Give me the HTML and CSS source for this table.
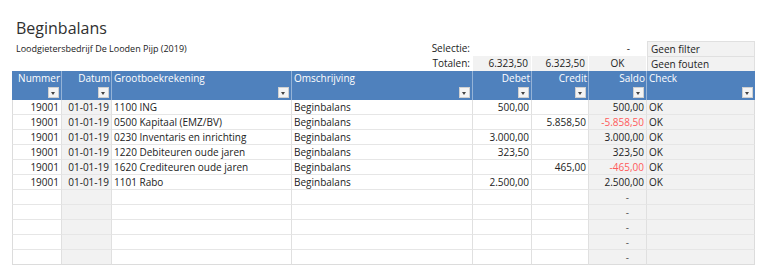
FILE: index.html
```html
<!DOCTYPE html>
<html lang="nl">
<head>
<meta charset="utf-8">
<title>Beginbalans</title>
<link rel="stylesheet" href="styles.css">
</head>
<body>
<div class="page">
  <h1 class="title">Beginbalans</h1>
  <div class="sheet">
    <div class="c sub span3">Loodgietersbedrijf De Looden Pijp (2019)</div>
    <div class="c r">Selectie:</div>
    <div class="c"></div>
    <div class="c"></div>
    <div class="c r dash">-</div>
    <div class="c box">Geen filter</div>

    <div class="c span3"></div>
    <div class="c r">Totalen:</div>
    <div class="c r tot">6.323,50</div>
    <div class="c r tot">6.323,50</div>
    <div class="c ctr tot">OK</div>
    <div class="c box">Geen fouten</div>

    <div class="h r"><span>Nummer</span><i class="flt"></i></div>
    <div class="h r"><span>Datum</span><i class="flt"></i></div>
    <div class="h"><span>Grootboekrekening</span><i class="flt"></i></div>
    <div class="h"><span>Omschrijving</span><i class="flt"></i></div>
    <div class="h r"><span>Debet</span><i class="flt"></i></div>
    <div class="h r"><span>Credit</span><i class="flt"></i></div>
    <div class="h r"><span>Saldo</span><i class="flt"></i></div>
    <div class="h last"><span>Check</span><i class="flt"></i></div>

    <div class="d r first">19001</div><div class="d r g">01-01-19</div><div class="d">1100 ING</div><div class="d">Beginbalans</div><div class="d r">500,00</div><div class="d r"></div><div class="d r g">500,00</div><div class="d g last">OK</div>
    <div class="d r first">19001</div><div class="d r g">01-01-19</div><div class="d">0500 Kapitaal (EMZ/BV)</div><div class="d">Beginbalans</div><div class="d r"></div><div class="d r">5.858,50</div><div class="d r g neg">-5.858,50</div><div class="d g last">OK</div>
    <div class="d r first">19001</div><div class="d r g">01-01-19</div><div class="d">0230 Inventaris en inrichting</div><div class="d">Beginbalans</div><div class="d r">3.000,00</div><div class="d r"></div><div class="d r g">3.000,00</div><div class="d g last">OK</div>
    <div class="d r first">19001</div><div class="d r g">01-01-19</div><div class="d">1220 Debiteuren oude jaren</div><div class="d">Beginbalans</div><div class="d r">323,50</div><div class="d r"></div><div class="d r g">323,50</div><div class="d g last">OK</div>
    <div class="d r first">19001</div><div class="d r g">01-01-19</div><div class="d">1620 Crediteuren oude jaren</div><div class="d">Beginbalans</div><div class="d r"></div><div class="d r">465,00</div><div class="d r g neg">-465,00</div><div class="d g last">OK</div>
    <div class="d r first">19001</div><div class="d r g">01-01-19</div><div class="d">1101 Rabo</div><div class="d">Beginbalans</div><div class="d r">2.500,00</div><div class="d r"></div><div class="d r g">2.500,00</div><div class="d g last">OK</div>

    <div class="d first"></div><div class="d g"></div><div class="d"></div><div class="d"></div><div class="d"></div><div class="d"></div><div class="d r g dash">-</div><div class="d g last"></div>
    <div class="d first"></div><div class="d g"></div><div class="d"></div><div class="d"></div><div class="d"></div><div class="d"></div><div class="d r g dash">-</div><div class="d g last"></div>
    <div class="d first"></div><div class="d g"></div><div class="d"></div><div class="d"></div><div class="d"></div><div class="d"></div><div class="d r g dash">-</div><div class="d g last"></div>
    <div class="d first"></div><div class="d g"></div><div class="d"></div><div class="d"></div><div class="d"></div><div class="d"></div><div class="d r g dash">-</div><div class="d g last"></div>
    <div class="d first bot"></div><div class="d g bot"></div><div class="d bot"></div><div class="d bot"></div><div class="d bot"></div><div class="d bot"></div><div class="d r g dash bot">-</div><div class="d g last bot"></div>
  </div>
</div>
</body>
</html>
```

FILE: styles.css
```css
html, body {
  margin: 0;
  padding: 0;
  background: #ffffff;
}

.page {
  font-family: "Open Sans", "Noto Sans", sans-serif;
  color: #222222;
  padding: 17px 0 0 12px;
}

.title {
  margin: 0 0 2px 4px;
  font-size: 16px;
  line-height: 22px;
  font-weight: 400;
  color: #303030;
}

.sheet {
  display: grid;
  grid-template-columns: 50px 50px 180px 181px 59px 57px 58px 108px;
  grid-auto-rows: 15px;
  grid-template-rows: 15px 15px 29px;
  font-size: 10px;
  width: 743px;
}

.c {
  padding: 0 3px;
  line-height: 15px;
  white-space: nowrap;
  overflow: visible;
}

.span3 {
  grid-column: span 3;
}

.sub {
  padding-left: 4px;
  font-size: 9px;
}

.r { text-align: right; }
.ctr { text-align: center; }

.dash {
  padding-right: 17px;
}

.tot {
  background: #f2f2f2;
  border-right: 1px solid #ffffff;
}

.box {
  background: #f2f2f2;
  border: 1px solid #e0e0e0;
  border-bottom: none;
  line-height: 14px;
}

.h {
  background: #4f81bd;
  color: #ffffff;
  display: flex;
  flex-direction: column;
  justify-content: space-between;
  padding: 0 1px 2px 2px;
  border-right: 1px solid #95b3d7;
  line-height: 15px;
}

.h.r {
  align-items: flex-end;
}

.h.last {
  border-right: none;
}

.flt {
  align-self: flex-end;
  width: 9px;
  height: 9px;
  background: #f4f4f4;
  border: 1px solid #d0d0d0;
  position: relative;
  margin-right: 1px;
}

.flt::after {
  content: "";
  position: absolute;
  left: 2px;
  top: 4px;
  border-left: 2.5px solid transparent;
  border-right: 2.5px solid transparent;
  border-top: 3px solid #444444;
}

.d {
  padding: 0 2px;
  line-height: 14px;
  height: 14.6px;
  box-sizing: border-box;
  border-right: 1px solid #e0e0e0;
  border-bottom: 1px solid #e6e6e6;
  white-space: nowrap;
}

.first {
  border-left: 1px solid #dcdcdc;
}

.last {
  border-right: 1px solid #dcdcdc;
}

.g {
  background: #f2f2f2;
}

.neg {
  color: #ff5a5a;
}

.d.dash {
  padding-right: 17px;
  color: #555555;
}

.bot {
  border-bottom: 1px solid #dcdcdc;
}
```
